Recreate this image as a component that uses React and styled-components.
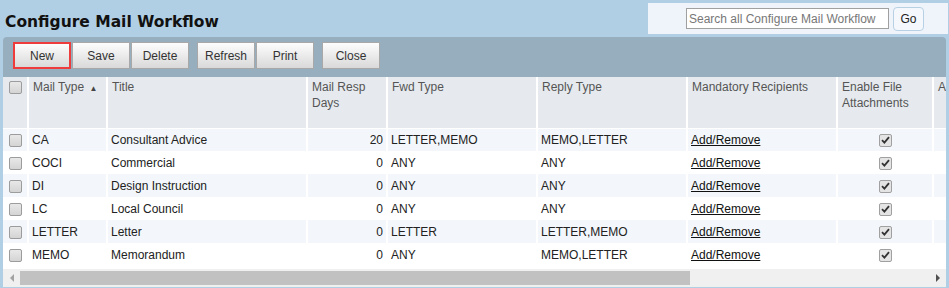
import styled, { createGlobalStyle } from "styled-components";

const GlobalStyle = createGlobalStyle`
  body {
    margin: 0;
    background: #b1cfe4;
    font-family: "Liberation Sans", Arial, sans-serif;
  }
`;

const rows = [
  { type: "CA", title: "Consultant Advice", days: 20, fwd: "LETTER,MEMO", reply: "MEMO,LETTER" },
  { type: "COCI", title: "Commercial", days: 0, fwd: "ANY", reply: "ANY" },
  { type: "DI", title: "Design Instruction", days: 0, fwd: "ANY", reply: "ANY" },
  { type: "LC", title: "Local Council", days: 0, fwd: "ANY", reply: "ANY" },
  { type: "LETTER", title: "Letter", days: 0, fwd: "LETTER", reply: "LETTER,MEMO" },
  { type: "MEMO", title: "Memorandum", days: 0, fwd: "ANY", reply: "MEMO,LETTER" },
];

const CheckMark = () => (
  <svg width="9" height="8" viewBox="0 0 9 8">
    <path d="M1 4.2 L3.4 6.6 L8 1.2" stroke="#333" strokeWidth="1.8" fill="none" />
  </svg>
);

const App = () => {
  return (
    <Page>
      <GlobalStyle />
      <TopBar>
        <Title>Configure Mail Workflow</Title>
        <SearchPanel>
          <SearchInput placeholder="Search all Configure Mail Workflow" />
          <GoButton>Go</GoButton>
        </SearchPanel>
      </TopBar>
      <Toolbar>
        <ButtonGroup>
          <ToolButton $active>New</ToolButton>
          <ToolButton>Save</ToolButton>
          <ToolButton>Delete</ToolButton>
        </ButtonGroup>
        <ButtonGroup>
          <ToolButton>Refresh</ToolButton>
          <ToolButton>Print</ToolButton>
        </ButtonGroup>
        <ButtonGroup>
          <ToolButton>Close</ToolButton>
        </ButtonGroup>
      </Toolbar>
      <Grid>
        <Table>
          <colgroup>
            <col style={{ width: 25 }} />
            <col style={{ width: 79 }} />
            <col style={{ width: 200 }} />
            <col style={{ width: 80 }} />
            <col style={{ width: 150 }} />
            <col style={{ width: 150 }} />
            <col style={{ width: 150 }} />
            <col style={{ width: 96 }} />
            <col style={{ width: 80 }} />
          </colgroup>
          <thead>
            <tr>
              <HeadCell $center>
                <Box />
              </HeadCell>
              <HeadCell>
                Mail Type <SortArrow>▲</SortArrow>
              </HeadCell>
              <HeadCell>Title</HeadCell>
              <HeadCell>Mail Resp Days</HeadCell>
              <HeadCell>Fwd Type</HeadCell>
              <HeadCell>Reply Type</HeadCell>
              <HeadCell>Mandatory Recipients</HeadCell>
              <HeadCell>Enable File Attachments</HeadCell>
              <HeadCell>Allow Task</HeadCell>
            </tr>
          </thead>
          <tbody>
            {rows.map((r, i) => (
              <Row key={r.type} $alt={i % 2 === 0}>
                <Cell $center>
                  <Box />
                </Cell>
                <Cell>{r.type}</Cell>
                <Cell>{r.title}</Cell>
                <Cell $right>{r.days}</Cell>
                <Cell>{r.fwd}</Cell>
                <Cell>{r.reply}</Cell>
                <Cell>
                  <Link>Add/Remove</Link>
                </Cell>
                <Cell $center>
                  <SmallBox>
                    <CheckMark />
                  </SmallBox>
                </Cell>
                <Cell />
              </Row>
            ))}
          </tbody>
        </Table>
        <ScrollBar>
          <ArrowLeft />
          <Track>
            <Thumb />
          </Track>
          <ArrowRight />
        </ScrollBar>
      </Grid>
    </Page>
  );
};

const Page = styled.div`
  padding: 0 3px;
  width: 943px;
  height: 288px;
  overflow: hidden;
`;

const TopBar = styled.div`
  display: flex;
  align-items: center;
  justify-content: space-between;
  height: 37px;
`;

const Title = styled.h1`
  margin: 7px 0 0 2px;
  font-family: "DejaVu Sans", Verdana, sans-serif;
  font-size: 15.5px;
  font-weight: bold;
  color: #111;
  letter-spacing: 0;
`;

const SearchPanel = styled.div`
  width: 300px;
  height: 31px;
  margin-right: -2px;
  margin-top: 3px;
  align-self: flex-start;
  background: #eff4fb;
  display: flex;
  align-items: center;
  justify-content: flex-end;
  gap: 4px;
  padding-right: 24px;
  box-sizing: border-box;
`;

const SearchInput = styled.input`
  width: 203px;
  height: 21px;
  box-sizing: border-box;
  border: 1px solid #a0a0a0;
  padding: 0 2px;
  font-family: "Liberation Sans", Arial, sans-serif;
  font-size: 12px;
  &::placeholder {
    color: #777;
  }
`;

const GoButton = styled.button`
  width: 31px;
  height: 24px;
  border: 1px solid #b8d0e4;
  border-radius: 4px;
  background: #f4f8fc;
  font-family: "Liberation Sans", Arial, sans-serif;
  font-size: 12px;
  color: #222;
  padding: 0;
`;

const Toolbar = styled.div`
  height: 40px;
  background: #97aebe;
  border-radius: 4px 4px 0 0;
  display: flex;
  align-items: flex-start;
  gap: 8px;
  padding: 5px 0 0 10px;
  box-sizing: border-box;
`;

const ButtonGroup = styled.div`
  display: flex;
  gap: 1px;
`;

const ToolButton = styled.button`
  width: 58px;
  height: 27px;
  box-sizing: border-box;
  border: ${(p) => (p.$active ? "2px solid #ee3b3b" : "1px solid #a8a8a8")};
  background: linear-gradient(#fdfdfd, #d9d9d9);
  font-family: "Liberation Sans", Arial, sans-serif;
  font-size: 12px;
  color: #333;
  padding: 0;
`;

const Grid = styled.div`
  background: #fff;
  overflow: hidden;
`;

const Table = styled.table`
  table-layout: fixed;
  border-collapse: collapse;
  width: 1010px;
  font-size: 12px;
`;

const HeadCell = styled.th`
  background: #e6eaee;
  height: 51px;
  box-sizing: border-box;
  border-right: 2px solid #fff;
  border-bottom: 1px solid #fff;
  vertical-align: top;
  text-align: ${(p) => (p.$center ? "center" : "left")};
  padding: 2px 4px 0 4px;
  font-weight: normal;
  color: #555;
  line-height: 16px;
  white-space: normal;
  overflow: hidden;
`;

const SortArrow = styled.span`
  font-size: 8px;
  color: #444;
  margin-left: 2px;
`;

const Row = styled.tr`
  background: ${(p) => (p.$alt ? "#f3f7fb" : "#fff")};
`;

const Cell = styled.td`
  height: 23px;
  box-sizing: border-box;
  padding: 0 3px;
  border-right: 2px solid #fff;
  color: #222;
  text-align: ${(p) => (p.$center ? "center" : p.$right ? "right" : "left")};
  white-space: nowrap;
  overflow: hidden;
  vertical-align: middle;
`;

const Box = styled.span`
  display: inline-block;
  width: 11px;
  height: 11px;
  border: 1px solid #9c9c9c;
  border-radius: 2px;
  background: linear-gradient(#e8e8e8, #d4d4d4);
  vertical-align: middle;
`;

const SmallBox = styled.span`
  display: inline-flex;
  align-items: center;
  justify-content: center;
  width: 11px;
  height: 11px;
  border: 1px solid #a0a0a0;
  border-radius: 2px;
  background: #e4e4e4;
  vertical-align: middle;
`;

const Link = styled.a`
  color: #111;
  text-decoration: underline;
  cursor: pointer;
`;

const ScrollBar = styled.div`
  margin-top: 3px;
  height: 18px;
  background: #f0f0f0;
  display: flex;
  align-items: center;
`;

const ArrowLeft = styled.span`
  width: 17px;
  display: flex;
  justify-content: center;
  &::before {
    content: "";
    border-right: 4px solid #a3a3a3;
    border-top: 4px solid transparent;
    border-bottom: 4px solid transparent;
  }
`;

const ArrowRight = styled.span`
  width: 17px;
  display: flex;
  justify-content: center;
  &::before {
    content: "";
    border-left: 4px solid #505050;
    border-top: 4px solid transparent;
    border-bottom: 4px solid transparent;
  }
`;

const Track = styled.div`
  flex: 1;
  height: 100%;
  display: flex;
  align-items: center;
`;

const Thumb = styled.div`
  width: 670px;
  height: 14px;
  background: #c1c1c1;
`;

export default App;
